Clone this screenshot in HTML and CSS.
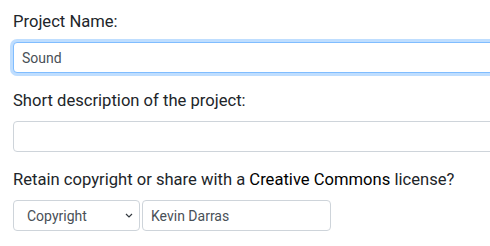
FILE: index.html
```html
<!DOCTYPE html>
<html lang="en">
<head>
    <meta charset="UTF-8" />
    <meta name="viewport" content="width=device-width, initial-scale=1.0"/>
    <title>New Project</title>
    <link rel="stylesheet" href="styles.css">
</head>
<body>

<form class="project-form">
    <div class="form-group">
        <label for="name">Project Name:</label>
        <input id="name" class="form-control focused" type="text" value="Sound">
    </div>

    <div class="form-group">
        <label for="desc">Short description of the project:</label>
        <input id="desc" class="form-control" type="text">
    </div>

    <div class="form-group">
        <label for="license">Retain copyright or share with a <span class="cc">Creative Commons</span> license?</label>
        <div class="license-row">
            <select id="license" class="form-select">
                <option>Copyright</option>
                <option>CC BY</option>
                <option>CC BY-SA</option>
            </select>
            <input class="form-control holder" type="text" value="Kevin Darras">
        </div>
    </div>
</form>

</body>
</html>
```

FILE: styles.css
```css
html, body {
    margin: 0;
    padding: 0;
    overflow: hidden;
    background: #fff;
}

body {
    font-family: Roboto, 'Liberation Sans', sans-serif;
    color: #212529;
}

.project-form {
    width: 520px;
    padding: 10px 13px 0;
}

.form-group {
    margin-bottom: 16px;
}

label {
    display: block;
    font-size: 16.6px;
    line-height: 24px;
    margin-bottom: 8px;
}

.cc {
    color: #000;
}

.form-control {
    display: block;
    box-sizing: border-box;
    width: 100%;
    height: 31px;
    margin: 0;
    padding: 4px 8px;
    font-family: inherit;
    font-size: 14px;
    line-height: 21px;
    color: #495057;
    background: #fff;
    border: 1px solid #ced4da;
    border-radius: 4px;
    outline: none;
}

.form-control.focused {
    border-color: #80bdff;
    box-shadow: 0 0 0 3px rgba(0, 123, 255, 0.25);
}

.license-row {
    display: flex;
    gap: 2px;
}

.form-select {
    box-sizing: border-box;
    width: 127px;
    height: 31px;
    margin: 0;
    padding: 4px 20px 4px 13px;
    font-family: inherit;
    font-size: 14px;
    color: #495057;
    border: 1px solid #ced4da;
    border-radius: 4px;
    appearance: none;
    -webkit-appearance: none;
    background: #fff url("data:image/svg+xml,%3Csvg xmlns='http://www.w3.org/2000/svg' width='8' height='5' viewBox='0 0 8 5'%3E%3Cpath d='M1 1l3 3 3-3' fill='none' stroke='%23343a40' stroke-width='1.2'/%3E%3C/svg%3E") no-repeat right 6px center;
}

.holder {
    width: 189px;
}
```
